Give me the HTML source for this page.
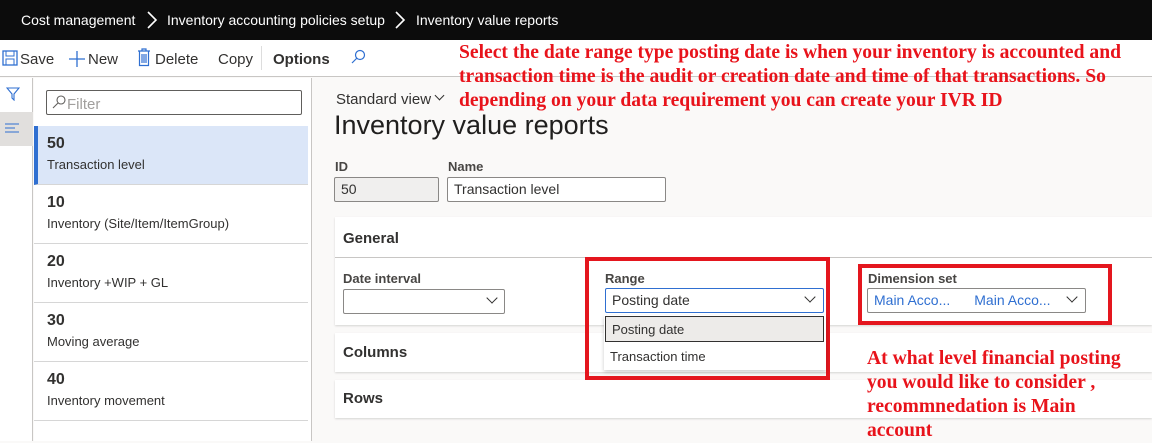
<!DOCTYPE html>
<html><head><style>
*{margin:0;padding:0;box-sizing:border-box}
body{width:1152px;height:441px;overflow:hidden;font-family:"Liberation Sans",sans-serif;background:#faf9f8;position:relative;color:#323130}
.a{position:absolute}
.top{left:0;top:0;width:1152px;height:40px;background:#0c0c0c;color:#fff;font-size:14px}
.tb{left:0;top:40px;width:1152px;height:37px;background:#fff;border-bottom:1px solid #c8c6c4;font-size:15px}
.rail{left:0;top:78px;width:33px;height:363px;background:#fff;border-right:1px solid #c8c6c4}
.list{left:34px;top:78px;width:278px;height:363px;background:#fff;border-right:1px solid #c8c6c4}
.it{position:absolute;left:0;width:274px;height:59px;border-bottom:1px solid #d6d6d6;padding:9px 0 0 13px}
.it b{display:block;font-size:16px;font-weight:bold;color:#323130}
.it span{display:block;font-size:13px;color:#323130;margin-top:4px}
.lbl{font-size:13px;font-weight:bold;color:#484644}
.in{border:1px solid #8a8886;border-radius:2px;background:#fff;font-size:14px;padding:3px 6px;height:25px}
.card{background:#fff;box-shadow:0 1px 2px rgba(0,0,0,.15);left:335px;width:817px}
.red{color:#e8131b;font-family:"Liberation Serif",serif;font-weight:bold;font-size:19.6px;line-height:24px;white-space:nowrap}
.box{border:4px solid #e4161e}
.chev{position:absolute;width:8px;height:8px;border-right:1.3px solid #323130;border-bottom:1.3px solid #323130;transform:rotate(45deg)}
</style></head><body>
<div class="a top">
<span class="a" style="left:21px;top:12px">Cost management</span>
<svg class="a" style="left:146px;top:10px" width="12" height="20"><path d="M2 2l8 8-8 8" stroke="#fff" stroke-width="1.6" fill="none"/></svg>
<span class="a" style="left:167px;top:12px">Inventory accounting policies setup</span>
<svg class="a" style="left:394px;top:10px" width="12" height="20"><path d="M2 2l8 8-8 8" stroke="#fff" stroke-width="1.6" fill="none"/></svg>
<span class="a" style="left:416px;top:12px">Inventory value reports</span>
</div>
<div class="a tb">
<svg class="a" style="left:2px;top:10px" width="16" height="16"><rect x="1" y="1" width="14" height="14" fill="none" stroke="#2f6fd1" stroke-width="1.3"/><rect x="4" y="1" width="8" height="5" fill="none" stroke="#2f6fd1"/><rect x="4" y="9" width="8" height="6" fill="none" stroke="#2f6fd1"/></svg>
<span class="a" style="left:20px;top:11px">Save</span>
<svg class="a" style="left:68px;top:10px" width="18" height="18"><path d="M9 1v16M1 9h16" stroke="#2f6fd1" stroke-width="1.3"/></svg>
<span class="a" style="left:88px;top:11px">New</span>
<svg class="a" style="left:137px;top:8px" width="14" height="19"><path d="M1 3h12M5 3V1h4v2M2.5 3.5v14h9v-14M5 6v9M7 6v9M9 6v9" stroke="#2f6fd1" stroke-width="1.2" fill="none"/></svg>
<span class="a" style="left:155px;top:11px">Delete</span>
<span class="a" style="left:218px;top:11px">Copy</span>
<div class="a" style="left:261px;top:6px;width:1px;height:24px;background:#ddd"></div>
<span class="a" style="left:273px;top:11px;font-weight:bold">Options</span>
<svg class="a" style="left:350px;top:9px" width="16" height="16"><circle cx="10" cy="6" r="4.5" fill="none" stroke="#2f6fd1" stroke-width="1.2"/><path d="M7 9l-5 5" stroke="#2f6fd1" stroke-width="1.2"/></svg>
</div>
<div class="a rail">
<svg class="a" style="left:6px;top:9px" width="14" height="14"><path d="M1 1h12L8 7v6L6 11V7z" fill="none" stroke="#2f6fd1" stroke-width="1.1"/></svg>
<div class="a" style="left:0;top:34px;width:33px;height:34px;background:#e1dfdd"></div>
<svg class="a" style="left:5px;top:45px" width="16" height="10"><path d="M0 1h14M0 5h10M0 9h14" stroke="#2f6fd1" stroke-width="1.1"/></svg>
</div>
<div class="a list">
<div class="a" style="left:12px;top:12px;width:256px;height:25px;border:1px solid #605e5c;border-radius:2px"></div>
<svg class="a" style="left:18px;top:17px" width="14" height="14"><circle cx="9" cy="5" r="4" fill="none" stroke="#605e5c" stroke-width="1.1"/><path d="M6 8l-5 5" stroke="#605e5c" stroke-width="1.1"/></svg>
<span class="a" style="left:33px;top:18px;font-size:15px;color:#a19f9d">Filter</span>
<div class="it" style="top:48px;background:#dbe6f8;border-left:4px solid #2f6fd1;padding-left:9px"><b>50</b><span>Transaction level</span></div>
<div class="it" style="top:107px"><b>10</b><span>Inventory (Site/Item/ItemGroup)</span></div>
<div class="it" style="top:166px"><b>20</b><span>Inventory +WIP + GL</span></div>
<div class="it" style="top:225px"><b>30</b><span>Moving average</span></div>
<div class="it" style="top:284px"><b>40</b><span>Inventory movement</span></div>
</div>
<span class="a" style="left:336px;top:91px;font-size:15px">Standard view</span>
<div class="chev" style="left:436px;top:92px;width:7px;height:7px"></div>
<div class="a" style="left:334px;top:110px;font-size:27px;color:#201f1e">Inventory value reports</div>
<span class="a lbl" style="left:335px;top:159px">ID</span>
<span class="a lbl" style="left:448px;top:159px">Name</span>
<div class="a in" style="left:334px;top:177px;width:105px;background:#f0efee">50</div>
<div class="a in" style="left:447px;top:177px;width:219px">Transaction level</div>
<div class="a card" style="top:217px;height:108px">
<div class="a" style="left:8px;top:13px;font-size:15px;font-weight:bold">General</div>
<div class="a" style="left:0;top:40px;width:817px;height:1px;background:#c8c6c4"></div>
<span class="a lbl" style="left:8px;top:54px">Date interval</span>
<div class="a in" style="left:8px;top:72px;width:162px"></div>
<div class="chev" style="left:153px;top:77px"></div>
</div>
<div class="a card" style="top:333px;height:39px"><div class="a" style="left:8px;top:11px;font-size:15px;font-weight:bold">Columns</div></div>
<div class="a card" style="top:380px;height:38px"><div class="a" style="left:8px;top:10px;font-size:15px;font-weight:bold">Rows</div></div>
<div class="a box" style="left:585px;top:257px;width:245px;height:123px"></div>
<span class="a lbl" style="left:605px;top:271px">Range</span>
<div class="a in" style="left:605px;top:288px;width:219px;border-color:#2f6fd1">Posting date</div>
<div class="chev" style="left:806px;top:293px"></div>
<div class="a" style="left:604px;top:315px;width:222px;height:55px;background:#fff;box-shadow:0 2px 4px rgba(0,0,0,.2)"></div>
<div class="a" style="left:605px;top:316px;width:219px;height:26px;background:#edebe9;border:1px solid #323130;font-size:13px;padding:5px 6px">Posting date</div>
<div class="a" style="left:610px;top:349px;font-size:13px">Transaction time</div>
<div class="a box" style="left:858px;top:264px;width:254px;height:61px"></div>
<span class="a lbl" style="left:868px;top:271px">Dimension set</span>
<div class="a in" style="left:867px;top:288px;width:219px;color:#2f6fd1">Main Acco...<span style="margin-left:24px">Main Acco...</span></div>
<div class="chev" style="left:1068px;top:293px"></div>
<div class="a red" style="left:459px;top:41px">Select the date range type posting date is when your inventory is accounted and<br>transaction time is the audit or creation date and time of that transactions. So<br>depending on your data requirement you can create your IVR ID</div>
<div class="a red" style="left:867px;top:347px">At what level financial posting<br>you would like to consider ,<br>recommnedation is Main<br>account</div>
</body></html>
